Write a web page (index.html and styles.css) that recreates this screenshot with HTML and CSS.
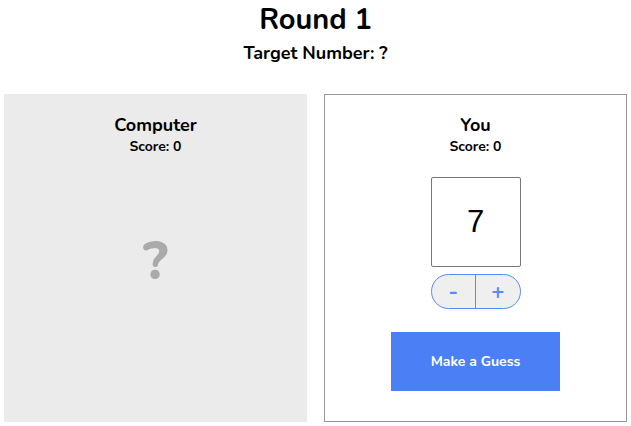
FILE: index.html
```html
<!DOCTYPE html>
<html lang="en">
<head>
    <meta charset="UTF-8">
    <title>Guess the Number</title>
    <link rel="stylesheet" href="styles.css">
</head>
<body>

    <header class="round-header">
        <h1>Round 1</h1>
        <h2>Target Number: ?</h2>
    </header>

    <main class="board">
        <!-- Computer side -->
        <section class="player computer">
            <h3>Computer</h3>
            <p class="score">Score: 0</p>
            <div class="mystery">?</div>
        </section>

        <!-- Player side -->
        <section class="player you">
            <h3>You</h3>
            <p class="score">Score: 0</p>
            <div class="guess-box">7</div>
            <div class="stepper">
                <button class="step-btn">-</button>
                <button class="step-btn">+</button>
            </div>
            <button class="guess-btn">Make a Guess</button>
        </section>
    </main>

</body>
</html>
```

FILE: styles.css
```css
body {
    font-family: "Nunito", "Lato", "Open Sans", sans-serif;
    margin: 0;
    padding: 0 4px;
    background-color: #fff;
    color: #000;
}

.round-header {
    text-align: center;
    padding-top: 2px;
}

.round-header h1 {
    font-size: 29px;
    font-weight: 700;
    margin: 0;
    line-height: 36px;
}

.round-header h2 {
    font-size: 18px;
    font-weight: 700;
    margin: 3px 0 0;
    line-height: 24px;
}

.board {
    display: grid;
    grid-template-columns: 1fr 1fr;
    gap: 17px;
    margin-top: 29px;
}

.player {
    height: 328px;
    box-sizing: border-box;
    display: flex;
    flex-direction: column;
    align-items: center;
    padding-top: 19px;
}

.computer {
    background-color: #ebebeb;
}

.you {
    border: 1px solid #999;
    padding-top: 18px;
}

.player h3 {
    font-size: 18px;
    font-weight: 700;
    margin: 0;
    line-height: 24px;
}

.score {
    font-size: 14px;
    font-weight: 700;
    margin: 0;
    line-height: 19px;
}

.mystery {
    font-size: 54px;
    font-weight: 800;
    color: #aaa;
    margin-top: 72px;
    line-height: 66px;
}

.guess-box {
    width: 90px;
    height: 90px;
    box-sizing: border-box;
    border: 1px solid #777;
    border-radius: 2px;
    margin-top: 21px;
    display: flex;
    align-items: center;
    justify-content: center;
    font-family: "Liberation Sans", Arial, sans-serif;
    font-size: 31px;
}

.stepper {
    display: flex;
    margin-top: 7px;
    width: 90px;
    height: 35px;
    box-sizing: border-box;
    border: 1px solid #5b8af5;
    border-radius: 18px;
    background-color: #efefef;
    overflow: hidden;
}

.step-btn {
    flex: 1;
    border: none;
    background: none;
    color: #5b8af5;
    font-family: inherit;
    font-size: 22px;
    font-weight: 700;
    padding: 0;
    line-height: 1;
}

.step-btn + .step-btn {
    border-left: 1px solid #5b8af5;
}

.guess-btn {
    margin-top: 23px;
    width: 169px;
    height: 59px;
    border: none;
    background-color: #4a7ff5;
    color: #fff;
    font-family: inherit;
    font-size: 14px;
    font-weight: 700;
}
```
